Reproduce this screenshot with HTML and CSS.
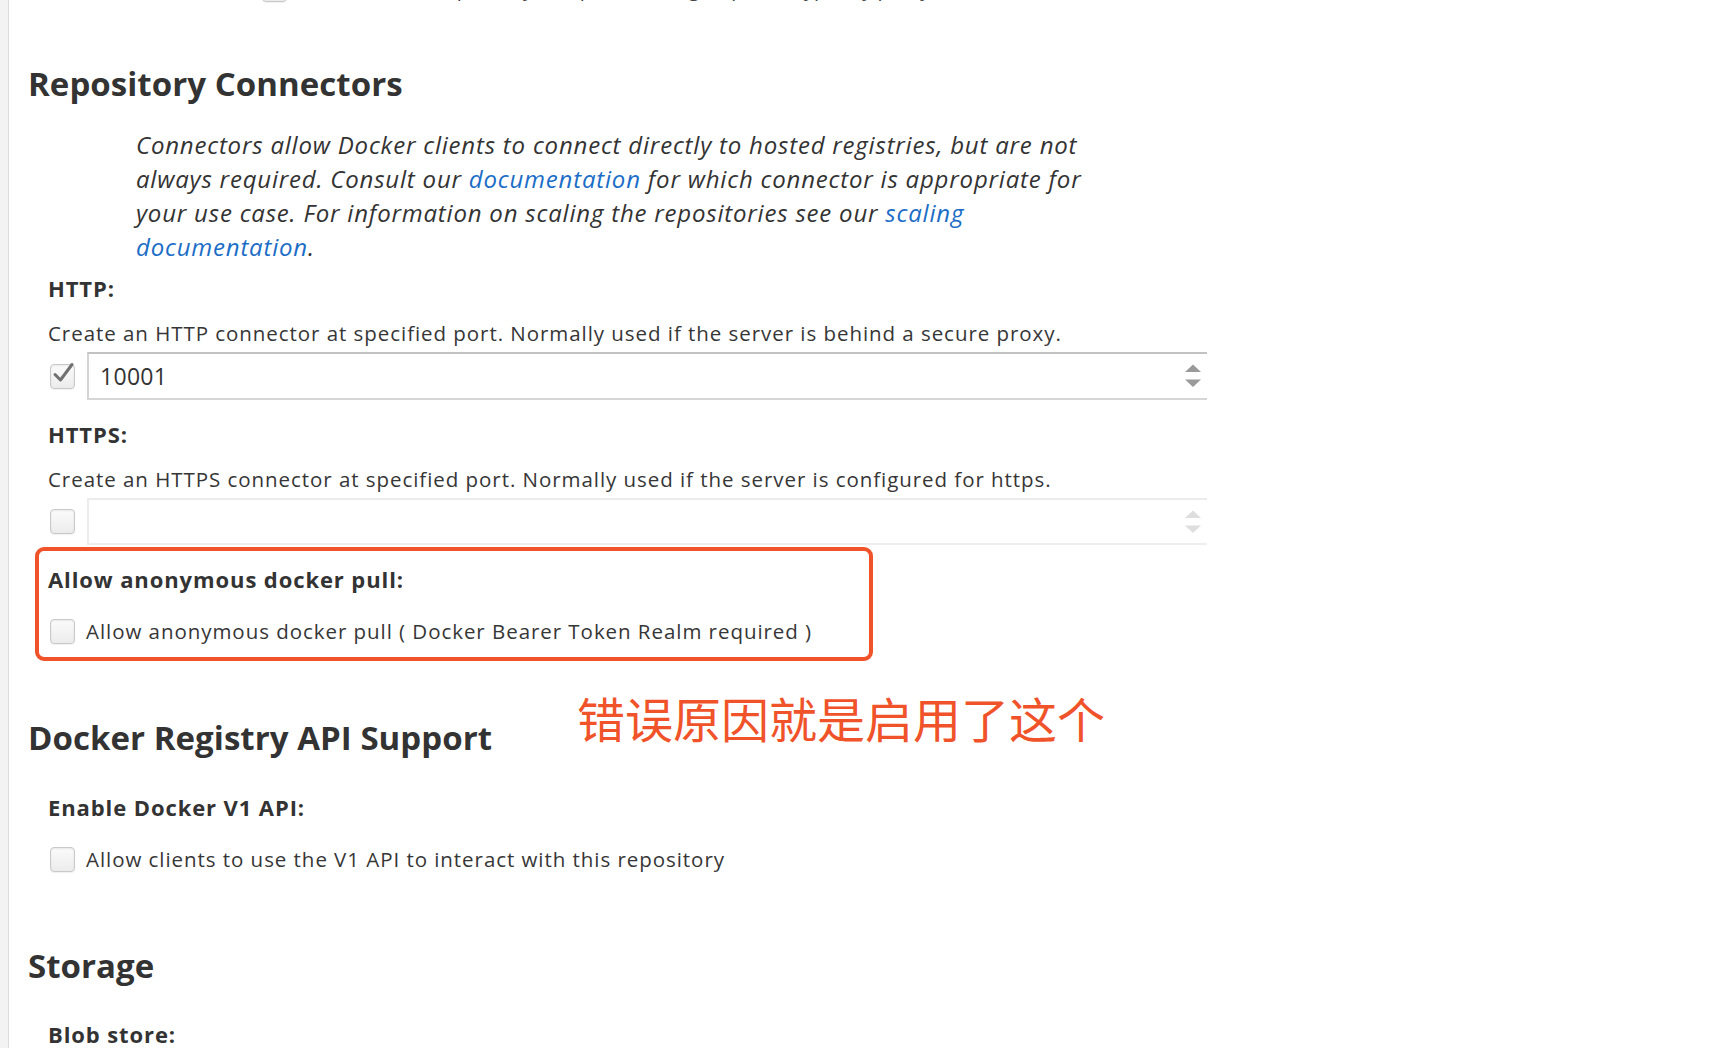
FILE: index.html
```html
<!DOCTYPE html>
<html lang="en">
<head>
<meta charset="utf-8">
<title>Repository settings</title>
<link rel="stylesheet" href="styles.css">
</head>
<body>
<div class="page">
  <div class="rail"></div>
  <main class="content">
    <div class="prev-row">
      <span class="checkbox"></span>
      <span class="prev-text">If checked, the repository accepts incoming requests (typically proxy)</span>
    </div>

    <h2 class="section-title first">Repository Connectors</h2>
    <p class="intro">Connectors allow Docker clients to connect directly to hosted registries, but are not<br>always required. Consult our <a href="#">documentation</a> for which connector is appropriate for<br>your use case. For information on scaling the repositories see our <a href="#">scaling</a><br><a href="#">documentation</a>.</p>

    <div class="field">
      <div class="field-label">HTTP:</div>
      <div class="field-help">Create an HTTP connector at specified port. Normally used if the server is behind a secure proxy.</div>
      <div class="field-row">
        <span class="checkbox checked">
          <svg class="tick" width="26" height="26" viewBox="0 0 26 26"><path d="M5 13.5 L10.5 19 L22 3.5" fill="none" stroke="#707070" stroke-width="3" stroke-linecap="round" stroke-linejoin="round"/></svg>
        </span>
        <div class="number-input">
          <span class="value">10001</span>
          <svg class="spinner" width="18" height="24" viewBox="0 0 18 24"><path d="M1 8 L9 0.5 L17 8 Z M1 15.5 L9 23 L17 15.5 Z" fill="#9a9a9a"/></svg>
        </div>
      </div>
    </div>

    <div class="field">
      <div class="field-label">HTTPS:</div>
      <div class="field-help">Create an HTTPS connector at specified port. Normally used if the server is configured for https.</div>
      <div class="field-row">
        <span class="checkbox"></span>
        <div class="number-input disabled">
          <span class="value"></span>
          <svg class="spinner" width="18" height="24" viewBox="0 0 18 24"><path d="M1 8 L9 0.5 L17 8 Z M1 15.5 L9 23 L17 15.5 Z" fill="#dedede"/></svg>
        </div>
      </div>
    </div>

    <div class="callout">
      <div class="field-label">Allow anonymous docker pull:</div>
      <label class="check-row">
        <span class="checkbox"></span>
        <span class="check-text">Allow anonymous docker pull ( Docker Bearer Token Realm required )</span>
      </label>
    </div>

    <div class="section-head">
      <h2 class="section-title">Docker Registry API Support</h2>
      <div class="annotation">错误原因就是启用了这个</div>
    </div>

    <div class="field plain">
      <div class="field-label">Enable Docker V1 API:</div>
      <label class="check-row">
        <span class="checkbox"></span>
        <span class="check-text">Allow clients to use the V1 API to interact with this repository</span>
      </label>
    </div>

    <h2 class="section-title storage">Storage</h2>
    <div class="field plain blob">
      <div class="field-label">Blob store:</div>
    </div>
  </main>
</div>
</body>
</html>
```

FILE: styles.css
```css
* { box-sizing: border-box; }

html, body {
  margin: 0;
  padding: 0;
  background: #ffffff;
}

body {
  font-family: "Open Sans", "Noto Sans", sans-serif;
  color: #333333;
  height: 1048px;
  overflow: hidden;
}

.page {
  display: flex;
  min-height: 1048px;
}

.rail {
  flex: none;
  width: 9px;
  background: #f3f3f3;
  border-right: 1px solid #dcdcdc;
}

.content {
  flex: 1;
  padding-left: 19px;
}

/* row partly scrolled off the top */
.prev-row {
  margin-top: -24px;
  height: 26px;
  display: flex;
  align-items: center;
  gap: 10px;
  padding-left: 232px;
  font-size: 20px;
  line-height: 24px;
  color: #444;
}

.section-title {
  margin: 0;
  font-size: 33px;
  line-height: 40px;
  font-weight: 700;
  letter-spacing: 0.05px;
  color: #333;
}

.section-title.first { margin-top: 62px; }

.intro {
  margin: 24px 0 0 108px;
  font-size: 24px;
  line-height: 34px;
  font-style: italic;
  letter-spacing: 0.8px;
  white-space: nowrap;
  color: #333;
}

.intro a {
  color: #1b6dc6;
  text-decoration: none;
}

.field {
  padding-left: 20px;
  margin-top: 21px;
}

.intro + .field { margin-top: 11px; }

.field-label {
  font-size: 22px;
  line-height: 26px;
  font-weight: 700;
  letter-spacing: 0.9px;
  color: #333;
}

.field-help {
  margin-top: 20px;
  font-size: 20.5px;
  line-height: 24px;
  letter-spacing: 0.95px;
  color: #363636;
}

.field-row {
  margin-top: 7px;
  display: flex;
  align-items: center;
  gap: 12px;
  width: 1159px;
}

.checkbox {
  flex: none;
  position: relative;
  width: 25px;
  height: 25px;
  margin-left: 2px;
  border: 1px solid #c9c9c9;
  border-radius: 4px;
  background: linear-gradient(#fbfbfb, #ececec);
  box-shadow: inset 0 1px 2px rgba(0,0,0,0.08), 0 1px 1px rgba(0,0,0,0.06);
}

.checkbox .tick {
  position: absolute;
  left: -1px;
  top: -4px;
}

.number-input {
  flex: 1;
  height: 48px;
  display: flex;
  align-items: center;
  justify-content: space-between;
  padding: 0 5px 0 11px;
  border-top: 2px solid #c2c2c2;
  border-left: 2px solid #d4d4d4;
  border-bottom: 2px solid #d6d6d6;
  background: #fff;
}

.number-input .value {
  font-size: 23px;
  letter-spacing: 0.3px;
  color: #333;
}

.number-input.disabled {
  height: 47px;
  border-top-color: #ececec;
  border-left-color: #ededed;
  border-bottom-color: #eeeeee;
}

.callout {
  margin: 2px 0 0 7px;
  width: 838px;
  border: 4px solid #f0532a;
  border-radius: 9px;
  padding: 15px 0 13px 9px;
}

.check-row {
  margin-top: 26px;
  display: flex;
  align-items: center;
  gap: 11px;
  height: 26px;
}

.check-text {
  font-size: 20.5px;
  line-height: 24px;
  letter-spacing: 0.95px;
  color: #363636;
}

.section-head {
  position: relative;
  margin-top: 57px;
}

.annotation {
  position: absolute;
  left: 549px;
  top: -25px;
  font-family: "Noto Sans CJK SC", sans-serif;
  font-size: 48px;
  line-height: 48px;
  font-weight: 400;
  color: #f0532a;
  white-space: nowrap;
}

.field.plain { margin-top: 36px; }

.section-title.storage { margin-top: 74px; }

.field.blob { margin-top: 35px; }
```
